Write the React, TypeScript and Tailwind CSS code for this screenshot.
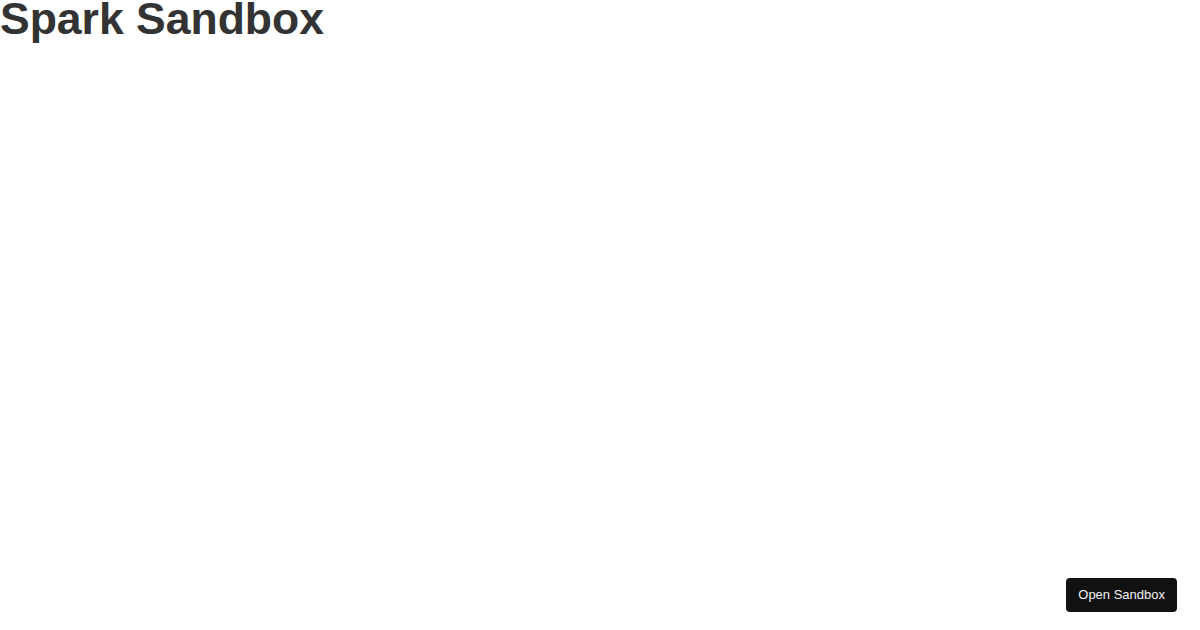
export default function App() {
  return (
    <main className="min-h-screen bg-white" style={{ fontFamily: '"Liberation Sans", Arial, sans-serif' }}>
      <h1 className="text-[44.5px] font-bold leading-[38px] text-[#333333] m-0">Spark Sandbox</h1>
      <button className="fixed right-[23px] bottom-[18px] h-[34px] px-[12px] rounded-[4px] bg-[#111111] text-[13px] text-[#f2f2f2]">
        Open Sandbox
      </button>
    </main>
  );
}
